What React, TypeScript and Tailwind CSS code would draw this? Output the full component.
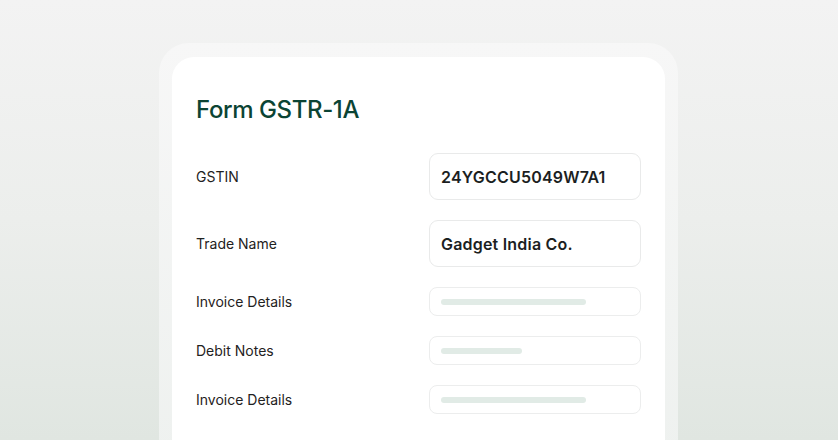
import React from "react";

type Field = { label: string; value?: string; bar?: number };

const fields: Field[] = [
  { label: "GSTIN", value: "24YGCCU5049W7A1" },
  { label: "Trade Name", value: "Gadget India Co." },
  { label: "Invoice Details", bar: 145 },
  { label: "Debit Notes", bar: 81 },
  { label: "Invoice Details", bar: 145 },
];

export default function App() {
  return (
    <div
      className="w-[838px] h-[440px] overflow-hidden bg-gradient-to-b from-[#f3f3f3] via-[#eceeec] to-[#e0e6e1]"
      style={{ fontFamily: "Inter, 'Noto Sans', sans-serif" }}
    >
      <div className="ml-[159px] mt-[43px] w-[519px] h-[420px] rounded-t-[30px] bg-gradient-to-b from-[#f7f7f7] to-[#eef1ef] px-[13px] pt-[14px]">
        <div className="h-full rounded-t-[22px] bg-white pl-[24px] pr-[24px] pt-[37px]">
          <h1 className="text-[24px] leading-[32px] font-medium text-[#0b4434] tracking-[-0.4px]">
            Form GSTR-1A
          </h1>
          <div className="mt-[27px] flex flex-col gap-5">
            {fields.map((f, i) => (
              <div key={i} className="flex items-center justify-between">
                <span className="text-[14px] text-[#1f2222]">{f.label}</span>
                {f.value ? (
                  <div className="w-[212px] h-[47px] rounded-[9px] border border-[#e9eaea] flex items-center px-[11px]">
                    <span className="text-[16px] font-semibold text-[#1c1f1f] tracking-[0.2px]">{f.value}</span>
                  </div>
                ) : (
                  <div className="w-[212px] h-[29px] rounded-[8px] border border-[#eceded] flex items-center px-[11px]">
                    <div className="h-[6px] rounded-full bg-[#e1ebe6]" style={{ width: f.bar }} />
                  </div>
                )}
              </div>
            ))}
          </div>
        </div>
      </div>
    </div>
  );
}
